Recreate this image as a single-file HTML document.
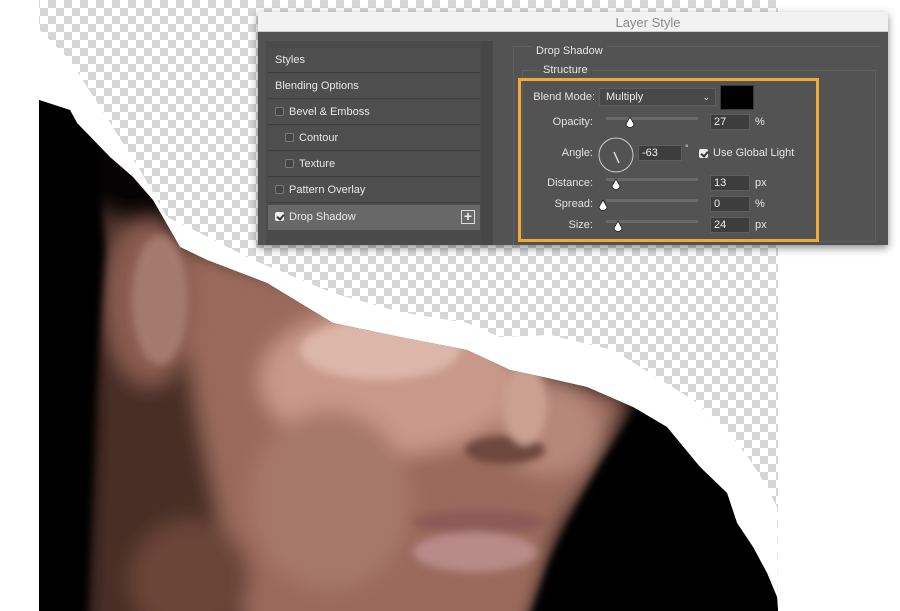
<!DOCTYPE html>
<html><head><meta charset="utf-8"><style>
*{margin:0;padding:0;box-sizing:border-box}
body{width:900px;height:611px;overflow:hidden;background:#fff;position:relative;font-family:"Liberation Sans",sans-serif}
.dlg{position:absolute;left:258px;top:12px;width:630px;height:233px;background:#535353;box-shadow:0 3px 8px rgba(0,0,0,.45)}
.title{height:20px;background:#f2f2f2;color:#8a8a8a;font-size:13px;text-align:center;line-height:21px;padding-left:150px;border-bottom:1px solid #cfcfcf}
.t{position:absolute;color:#e6e6e6;font-size:11px;white-space:nowrap}
.row{position:absolute;left:10px;width:212px;height:25px;background:#4e4e4e;border-bottom:1px solid #3f3f3f;color:#e8e8e8;font-size:11px;line-height:25px;padding-left:7px}
.cb{display:inline-block;width:9px;height:9px;border:1px solid #7a7a7a;border-radius:2px;background:#444;vertical-align:-1px;margin-right:5px}
.cbk{background:#eee;border-color:#eee;position:relative}
.cbk:after{content:"";position:absolute;left:2px;top:0px;width:3px;height:5px;border:solid #333;border-width:0 2px 2px 0;transform:rotate(40deg)}
.slider{position:absolute;height:3px;background:#6a6a6a;width:92px}
.inp{position:absolute;width:40px;height:16px;background:#3d3d3d;border:1px solid #5e5e5e;color:#eee;font-size:11px;line-height:14px;padding-left:3px}
.lbl{position:absolute;color:#e2e2e2;font-size:11px;text-align:right;width:80px}
</style></head><body>
<svg width="900" height="611" style="position:absolute;left:0;top:0">
<defs>
<pattern id="ck" width="16" height="16" patternUnits="userSpaceOnUse">
<rect width="16" height="16" fill="#fff"/><rect width="8" height="8" fill="#d6d6d6"/><rect x="8" y="8" width="8" height="8" fill="#d6d6d6"/></pattern>
<clipPath id="ph"><polygon points="39,100 70,110 77,123 110,157 133,177 153,200 180,247 207,260 267,283 300,303 333,323 400,337 467,350 510,370 543,377 587,387 633,407 667,427 700,467 727,493 737,523 753,547 767,573 777,597 778,611 39,611"/></clipPath>
<filter id="bl" x="-20%" y="-20%" width="140%" height="140%"><feGaussianBlur stdDeviation="10"/></filter>
<filter id="bl2"><feGaussianBlur stdDeviation="4"/></filter>
</defs>
<rect x="39" y="0" width="739" height="611" fill="url(#ck)"/>
<polygon fill="#fff" points="39,30 70,60 100,107 140,170 167,217 200,233 253,260 333,293 400,312 467,323 500,337 550,335 613,350 650,373 693,400 727,430 750,460 767,487 777,507 778,611 39,611"/>
<rect x="0" y="0" width="39" height="611" fill="#fff"/>
<g clip-path="url(#ph)">
<rect x="0" y="0" width="900" height="611" fill="#050303"/>
<g filter="url(#bl)">
<polygon fill="#4a2e26" points="90,200 200,250 260,400 230,660 85,660 95,420"/>
<polygon fill="#9a6a5c" points="170,240 420,320 630,400 600,470 560,530 520,660 250,660 200,420"/>
<ellipse cx="390" cy="380" rx="130" ry="75" fill="#c8998a"/>
<ellipse cx="330" cy="500" rx="80" ry="90" fill="#a5786a"/>
<ellipse cx="150" cy="300" rx="45" ry="85" fill="#8a5c50"/>
<ellipse cx="550" cy="430" rx="50" ry="45" fill="#b5887a"/>
<ellipse cx="190" cy="580" rx="60" ry="60" fill="#6a4438"/>
</g>
<polygon fill="#050303" filter="url(#bl2)" points="640,405 700,460 790,540 790,660 515,660 550,560 575,510 600,465"/>
<polygon fill="#050303" filter="url(#bl2)" points="30,90 95,120 105,250 95,400 85,660 30,660"/>
<g filter="url(#bl2)">
<ellipse cx="160" cy="300" rx="28" ry="65" fill="#a57a6e"/>
<ellipse cx="480" cy="522" rx="68" ry="12" fill="#8c5c58"/>
<ellipse cx="475" cy="552" rx="62" ry="20" fill="#b88a88"/>
<ellipse cx="505" cy="450" rx="40" ry="14" fill="#6e463c"/>
<ellipse cx="525" cy="405" rx="22" ry="40" fill="#caa090"/>
<ellipse cx="380" cy="350" rx="80" ry="30" fill="#dcb6a8"/>
</g>
</g>
</svg>

<div class="dlg">
<div class="title">Layer Style</div>
<div style="position:absolute;left:8px;top:29px;width:227px;height:204px;background:#4a4a4a"></div>
<div style="position:absolute;left:223px;top:29px;width:12px;height:204px;background:#474747"></div>
<div class="row" style="top:36px">Styles</div>
<div class="row" style="top:62px">Blending Options</div>
<div class="row" style="top:88px"><span class="cb"></span>Bevel &amp; Emboss</div>
<div class="row" style="top:114px;padding-left:17px"><span class="cb"></span>Contour</div>
<div class="row" style="top:140px;padding-left:17px"><span class="cb"></span>Texture</div>
<div class="row" style="top:166px"><span class="cb"></span>Pattern Overlay</div>
<div class="row" style="top:193px;background:#686868;border:none"><span class="cb cbk"></span>Drop Shadow
<span style="position:absolute;right:5px;top:5px;width:14px;height:14px;border:1px solid #ddd;color:#eee;font-size:14px;line-height:11px;text-align:center;font-weight:bold">+</span></div>

<div style="position:absolute;left:255px;top:34px;width:367px;height:199px;border:1px solid #5f5f5f;border-right:none;border-bottom:none"></div>
<div class="t" style="left:274px;top:33px;background:#535353;padding:0 4px">Drop Shadow</div>
<div style="position:absolute;left:264px;top:58px;width:354px;height:172px;border:1px solid #5f5f5f"></div>
<div class="t" style="left:281px;top:52px;background:#535353;padding:0 4px">Structure</div>

<div style="position:absolute;left:260px;top:66px;width:301px;height:164px;border:3px solid #f1aa34"></div>
<div class="lbl" style="left:257px;top:79px">Blend Mode:</div>
<div style="position:absolute;left:341px;top:76px;width:117px;height:18px;background:#484848;border:1px solid #5e5e5e;color:#eee;font-size:11px;line-height:16px;padding-left:6px">Multiply<span style="position:absolute;right:5px;top:0;font-size:9px">&#8964;</span></div>
<div style="position:absolute;left:462px;top:73px;width:34px;height:25px;background:#000;border:1px solid #3a3a3a"></div>

<div class="lbl" style="left:255px;top:104px">Opacity:</div>
<div class="slider" style="left:348px;top:105px"></div>
<svg style="position:absolute;left:366px;top:104px" width="12" height="12"><path d="M6 1 L10 8 A4 3.5 0 0 1 2 8 Z" fill="#fff" stroke="#222" stroke-width=".8"/></svg>
<div class="inp" style="left:452px;top:102px">27</div><div class="t" style="left:497px;top:104px">%</div>

<div class="lbl" style="left:255px;top:135px">Angle:</div>
<svg style="position:absolute;left:339px;top:124px" width="38" height="38"><circle cx="19" cy="19" r="17" fill="none" stroke="#ccc" stroke-width="1"/><line x1="17" y1="16" x2="22" y2="27" stroke="#ddd" stroke-width="1.5"/></svg>
<div class="inp" style="left:380px;top:133px;width:44px">-63</div><div class="t" style="left:427px;top:131px;font-size:9px">°</div>
<span class="cb cbk" style="position:absolute;left:441px;top:137px"></span>
<div class="t" style="left:455px;top:135px">Use Global Light</div>

<div class="lbl" style="left:255px;top:165px">Distance:</div>
<div class="slider" style="left:348px;top:166px"></div>
<svg style="position:absolute;left:352px;top:166px" width="12" height="12"><path d="M6 1 L10 8 A4 3.5 0 0 1 2 8 Z" fill="#fff" stroke="#222" stroke-width=".8"/></svg>
<div class="inp" style="left:452px;top:163px">13</div><div class="t" style="left:497px;top:165px">px</div>

<div class="lbl" style="left:255px;top:186px">Spread:</div>
<div class="slider" style="left:348px;top:187px"></div>
<svg style="position:absolute;left:339px;top:187px" width="12" height="12"><path d="M6 1 L10 8 A4 3.5 0 0 1 2 8 Z" fill="#fff" stroke="#222" stroke-width=".8"/></svg>
<div class="inp" style="left:452px;top:184px">0</div><div class="t" style="left:497px;top:186px">%</div>

<div class="lbl" style="left:255px;top:207px">Size:</div>
<div class="slider" style="left:348px;top:208px"></div>
<svg style="position:absolute;left:354px;top:208px" width="12" height="12"><path d="M6 1 L10 8 A4 3.5 0 0 1 2 8 Z" fill="#fff" stroke="#222" stroke-width=".8"/></svg>
<div class="inp" style="left:452px;top:205px">24</div><div class="t" style="left:497px;top:207px">px</div>
</div>
</body></html>
